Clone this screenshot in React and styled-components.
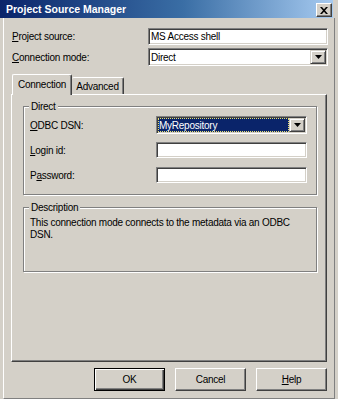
import React from 'react';
import styled, { createGlobalStyle, css } from 'styled-components';

const UI = `"Liberation Sans", Arial, sans-serif`;

const Global = createGlobalStyle`
  html, body { margin: 0; padding: 0; background: #d4d0c8; }
  body { font-family: ${UI}; font-size: 10px; letter-spacing: -0.25px; color: #000; }
  * { box-sizing: border-box; }
`;

const sunken = css`
  border: 1px solid;
  border-color: #808080 #fff #fff #808080;
  box-shadow: inset 1px 1px #404040, inset -1px -1px #d4d0c8;
`;

const raised = css`
  border: 1px solid;
  border-color: #fff #404040 #404040 #fff;
  box-shadow: inset -1px -1px #808080;
`;

const Frame = styled.div`
  width: 338px;
  height: 399px;
  display: flex;
  flex-direction: column;
  background: #d4d0c8;
`;

const TitleBar = styled.div`
  width: 333px;
  height: 18px;
  flex: none;
  display: flex;
  align-items: center;
  justify-content: space-between;
  padding: 0 1px 0 6px;
  background: linear-gradient(to right, #0a246a 0%, #3a6ea5 55%, #a6caf0 100%);
`;

const Title = styled.span`
  font-family: "Liberation Sans", Arial, sans-serif;
  font-weight: bold;
  font-size: 10.5px;
  letter-spacing: 0;
  color: #fff;
  white-space: nowrap;
`;

const CloseButton = styled.div`
  ${raised}
  width: 16px;
  height: 14px;
  margin-top: 2px;
  background: #d4d0c8;
  display: flex;
  align-items: center;
  justify-content: center;
`;

const Client = styled.div`
  flex: 1;
  width: 332px;
  margin-left: 3px;
  display: flex;
  flex-direction: column;
  padding: 10px 7px 7px 7px;
  border-left: 1px solid #fff;
  border-right: 1px solid #808080;
  border-bottom: 1px solid #808080;
`;

const Row = styled.div`
  display: grid;
  grid-template-columns: ${p => p.$cols};
  align-items: center;
  margin-top: ${p => p.$mt || 0}px;
`;

const TopForm = styled.div`
  margin: 0 -1px 0 1px;
`;

const Label = styled.label`
  white-space: nowrap;
  line-height: 13px;
`;

const Field = styled.div`
  ${sunken}
  height: ${p => p.$h}px;
  background: #fff;
  display: flex;
  align-items: stretch;
  padding: 1px;
`;

const Value = styled.span`
  flex: 1;
  display: flex;
  align-items: center;
  padding-left: 1px;
  white-space: nowrap;
  overflow: hidden;
  ${p => p.$selected && css`
    background: #0a246a;
    color: #fff;
    outline: 1px dotted #e8e070;
    outline-offset: -1px;
  `}
`;

const DropButton = styled.span`
  border: 1px solid;
  border-color: #d4d0c8 #404040 #404040 #d4d0c8;
  box-shadow: inset 1px 1px #fff, inset -1px -1px #808080;
  width: 16px;
  flex: none;
  background: #d4d0c8;
  display: flex;
  align-items: center;
  justify-content: center;
`;

const TabStrip = styled.div`
  display: flex;
  align-items: flex-end;
  height: 20px;
  margin: 8px 0 0 1px;
`;

const Tab = styled.div`
  position: relative;
  background: #d4d0c8;
  display: flex;
  align-items: center;
  justify-content: center;
  white-space: nowrap;
  border-top: 1px solid #fff;
  border-right: 1px solid #404040;
  box-shadow: inset -1px 0 #808080;
  border-radius: 2px 2px 0 0;
  ${p => p.$active ? css`
    width: 60px;
    height: 21px;
    margin-bottom: -1px;
    z-index: 1;
    border-left: 1px solid #fff;
    padding-bottom: 2px;
  ` : css`
    width: 52px;
    height: 17px;
  `}
`;

const Panel = styled.div`
  width: 316px;
  height: 268px;
  flex: none;
  border: 1px solid;
  border-color: #fff #404040 #404040 #fff;
  box-shadow: inset -1px -1px #808080;
  padding: 5px 9px 0 11px;
`;

const Group = styled.fieldset`
  margin: ${p => p.$mt || 0}px 0 0 0;
  min-width: 0;
  border: 1px solid #808080;
  box-shadow: inset 1px 1px #fff, 1px 1px #fff;
  padding: 3px 9px ${p => p.$pb}px 6px;
`;

const Legend = styled.legend`
  padding: 0 2px;
  margin-left: -1px;
  line-height: 13px;
  background: #d4d0c8;
`;

const Description = styled.p`
  margin: 0;
  max-width: 262px;
  line-height: 12px;
`;

const ButtonRow = styled.div`
  display: flex;
  justify-content: flex-end;
  gap: 10px;
  margin-top: 6px;
`;

const Button = styled.button`
  width: 71px;
  height: 23px;
  padding: 0;
  font: inherit;
  letter-spacing: inherit;
  color: #000;
  background: #d4d0c8;
  border: 1px solid;
  border-color: #fff #404040 #404040 #fff;
  box-shadow: inset -1px -1px #808080;
  ${p => p.$default && css`
    border-color: #000;
    box-shadow: inset 1px 1px #fff, inset -1px -1px #404040, inset -2px -2px #808080;
  `}
`;

const Arrow = () => (
  <svg width="7" height="4" viewBox="0 0 7 4"><path d="M0 0h7L3.5 4z" fill="#000" /></svg>
);

const CloseGlyph = () => (
  <svg width="8" height="7" viewBox="0 0 8 7">
    <path d="M0 0h2l2 2.2L6 0h2L5 3.5 8 7H6L4 4.8 2 7H0l3-3.5z" fill="#000" />
  </svg>
);

export default function App() {
  return (
    <>
      <Global />
      <Frame>
        <TitleBar>
          <Title>Project Source Manager</Title>
          <CloseButton><CloseGlyph /></CloseButton>
        </TitleBar>
        <Client>
          <TopForm>
            <Row $cols="136px 180px">
              <Label><u>P</u>roject source:</Label>
              <Field $h={17}><Value>MS Access shell</Value></Field>
            </Row>
            <Row $cols="136px 180px" $mt={3}>
              <Label><u>C</u>onnection mode:</Label>
              <Field $h={18}><Value>Direct</Value><DropButton><Arrow /></DropButton></Field>
            </Row>
          </TopForm>
          <TabStrip>
            <Tab $active>Connection</Tab>
            <Tab>Advanced</Tab>
          </TabStrip>
          <Panel>
            <Group $pb={11}>
              <Legend>Direct</Legend>
              <Row $cols="126px 151px">
                <Label><u>O</u>DBC DSN:</Label>
                <Field $h={18}><Value $selected>MyRepository</Value><DropButton><Arrow /></DropButton></Field>
              </Row>
              <Row $cols="126px 151px" $mt={8}>
                <Label><u>L</u>ogin id:</Label>
                <Field $h={16}><Value /></Field>
              </Row>
              <Row $cols="126px 151px" $mt={9}>
                <Label>P<u>a</u>ssword:</Label>
                <Field $h={16}><Value /></Field>
              </Row>
            </Group>
            <Group $mt={6} $pb={30}>
              <Legend>Description</Legend>
              <Description>This connection mode connects to the metadata via an ODBC DSN.</Description>
            </Group>
          </Panel>
          <ButtonRow>
            <Button $default>OK</Button>
            <Button>Cancel</Button>
            <Button><u>H</u>elp</Button>
          </ButtonRow>
        </Client>
      </Frame>
    </>
  );
}
